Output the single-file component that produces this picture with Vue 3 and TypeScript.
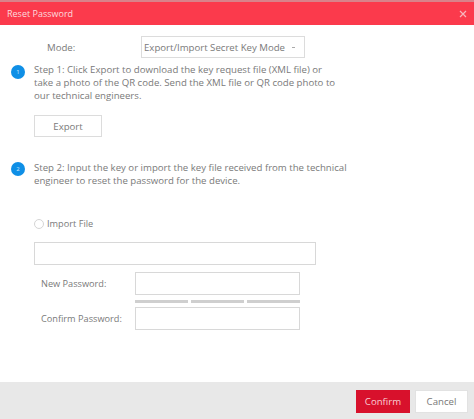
<script setup lang="ts">
const strengthBars = [1, 2, 3];
</script>

<template>
    <div class="dialog">
        <header class="title-bar">
            <span>Reset Password</span>
            <svg class="close" width="8" height="8" viewBox="0 0 8 8">
                <path d="M1 1 7 7M7 1 1 7" stroke="#f7b6bd" stroke-width="1.2" fill="none" />
            </svg>
        </header>

        <main class="body">
            <div class="mode-row">
                <label class="mode-label">Mode:</label>
                <div class="select">
                    <span>Export/Import Secret Key Mode</span>
                    <i class="caret" />
                </div>
            </div>

            <section class="step step-one">
                <span class="badge">1</span>
                <p>
                    Step 1: Click Export to download the key request file (XML file) or<br />
                    take a photo of the QR code. Send the XML file or QR code photo to<br />
                    our technical engineers.
                </p>
            </section>

            <button class="export" type="button">Export</button>

            <section class="step step-two">
                <span class="badge">2</span>
                <p>
                    Step 2: Input the key or import the key file received from the technical<br />
                    engineer to reset the password for the device.
                </p>
            </section>

            <div class="radio-row">
                <i class="radio" />
                <span>Import File</span>
            </div>

            <div class="input wide" />

            <div class="field field-new">
                <label>New Password:</label>
                <div class="input" />
            </div>
            <div class="strength">
                <i v-for="bar in strengthBars" :key="bar" />
            </div>
            <div class="field">
                <label>Confirm Password:</label>
                <div class="input" />
            </div>
        </main>

        <footer class="footer">
            <button class="btn primary" type="button">Confirm</button>
            <button class="btn" type="button">Cancel</button>
        </footer>
    </div>
</template>

<style>
html,
body {
    margin: 0;
    background: #fff;
}
</style>

<style scoped>
.dialog {
    width: 474px;
    height: 419px;
    display: flex;
    flex-direction: column;
    overflow: hidden;
    font-family: "Open Sans", "Liberation Sans", sans-serif;
    font-size: 9.65px;
    color: #7a7a7a;
    background: #fff;
}

.title-bar {
    flex-shrink: 0;
    height: 23px;
    margin-top: 2px;
    padding: 0 7px;
    display: flex;
    align-items: center;
    justify-content: space-between;
    color: #fbdcdf;
    font-size: 9px;
    background: #fb3a4c;
    box-shadow: 0 -2px 0 #d9828a;
}

.body {
    flex: 1;
    min-height: 0;
    padding-top: 11px;
}

.mode-row {
    display: flex;
    align-items: center;
    padding-left: 47px;
}

.mode-label {
    width: 94px;
}

.select {
    width: 164px;
    height: 22px;
    box-sizing: border-box;
    padding-left: 2px;
    display: flex;
    align-items: center;
    gap: 7px;
    white-space: nowrap;
    border: 1px solid #dcdcdc;
}

.caret {
    width: 3px;
    height: 1px;
    background: #aaa;
}

.step {
    display: flex;
    gap: 9px;
    padding-left: 11px;
}

.step p {
    margin: 0;
    line-height: 13px;
    white-space: nowrap;
}

.step-one {
    margin-top: 5px;
}

.step-two {
    margin-top: 24px;
}

.badge {
    flex-shrink: 0;
    width: 14px;
    height: 14px;
    margin-top: 1px;
    border-radius: 50%;
    display: flex;
    align-items: center;
    justify-content: center;
    color: #cfe8fb;
    font-size: 6px;
    background: #0f8fe6;
}

.step-one .badge {
    margin-top: 2px;
}

.export {
    display: block;
    width: 68px;
    height: 22px;
    margin: 13px 0 0 34px;
    padding: 0;
    font: inherit;
    color: inherit;
    background: #fff;
    border: 1px solid #dcdcdc;
}

.radio-row {
    margin: 30px 0 0 34px;
    display: flex;
    align-items: center;
    gap: 3px;
}

.radio {
    width: 8px;
    height: 8px;
    border: 1px solid #d5d5d5;
    border-radius: 50%;
}

.radio-row span,
.field label {
    font-size: 9.2px;
}

.input {
    width: 165px;
    height: 23px;
    box-sizing: border-box;
    border: 1px solid #d8d8d8;
    background: #fff;
}

.wide {
    width: 282px;
    margin: 12px 0 0 34px;
}

.field {
    display: flex;
    align-items: center;
    padding-left: 41px;
}

.field label {
    width: 94px;
}

.field-new {
    margin-top: 7px;
}

.strength {
    display: flex;
    gap: 3px;
    margin: 5px 0 4px 135px;
}

.strength i {
    width: 53px;
    height: 3px;
    background: #cfcfcf;
}

.footer {
    flex-shrink: 0;
    height: 37px;
    padding: 2px 6px 0 0;
    box-sizing: border-box;
    display: flex;
    align-items: center;
    justify-content: flex-end;
    gap: 5px;
    background: #e8e8e8;
}

.btn {
    width: 53px;
    height: 23px;
    padding: 0;
    font: inherit;
    color: #777;
    background: #fff;
    border: 1px solid #e2e2e2;
}

.primary {
    width: 54px;
    color: #f8d0d5;
    background: #d8112c;
    border-color: #d8112c;
}
</style>
